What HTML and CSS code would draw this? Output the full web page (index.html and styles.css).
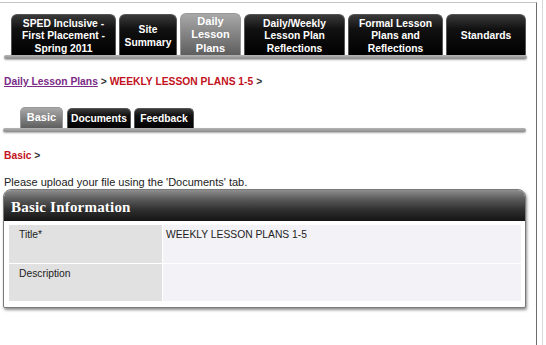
FILE: index.html
```html
<!DOCTYPE html>
<html>
<head>
<meta charset="utf-8">
<link rel="stylesheet" href="styles.css">
</head>
<body>
<div class="frame">
  <nav class="maintabs">
    <div class="tabrow">
      <a class="tab w1">SPED Inclusive -<br>First Placement -<br>Spring 2011</a>
      <a class="tab w2">Site<br>Summary</a>
      <a class="tab w3 active">Daily<br>Lesson<br>Plans</a>
      <a class="tab w4">Daily/Weekly<br>Lesson Plan<br>Reflections</a>
      <a class="tab w5">Formal Lesson<br>Plans and<br>Reflections</a>
      <a class="tab w6">Standards</a>
    </div>
    <div class="underbar"></div>
  </nav>

  <div class="crumbs">
    <a class="crumb-link">Daily Lesson Plans</a> <span class="sep">&gt;</span> <span class="crumb-cur">WEEKLY LESSON PLANS 1-5</span> <span class="sep">&gt;</span>
  </div>

  <nav class="subtabs">
    <div class="subrow">
      <a class="stab s1 active">Basic</a>
      <a class="stab s2">Documents</a>
      <a class="stab s3">Feedback</a>
    </div>
    <div class="underbar small"></div>
  </nav>

  <div class="subcrumb"><span class="crumb-cur">Basic</span> <span class="sep">&gt;</span></div>

  <p class="note">Please upload your file using the 'Documents' tab.</p>

  <section class="box">
    <h2 class="box-head">Basic Information</h2>
    <div class="grid">
      <div class="lbl r1">Title*</div>
      <div class="val r1">WEEKLY LESSON PLANS 1-5</div>
      <div class="lbl r2">Description</div>
      <div class="val r2"></div>
    </div>
  </section>
</div>
<div class="scroll"></div>
</body>
</html>
```

FILE: styles.css
```css
html, body {
  margin: 0;
  padding: 0;
  background: #fff;
}
body {
  font-family: "Liberation Sans", Arial, sans-serif;
  font-size: 11px;
  color: #222;
  position: relative;
  width: 546px;
  height: 345px;
  overflow: hidden;
}
.frame {
  margin-top: 2px;
  width: 537px;
  height: 343px;
  border-top: 1px solid #c6c6c6;
  border-right: 1px solid #6e6e6e;
  box-sizing: border-box;
}
.scroll {
  position: absolute;
  left: 542px;
  top: 0;
  width: 4px;
  height: 345px;
  border-left: 1px solid #d8d8d8;
}
.maintabs {
  margin: 10px 0 0 4px;
  width: 523px;
}
.tabrow {
  display: flex;
  align-items: flex-end;
  gap: 3px;
  padding-left: 7px;
}
.tab {
  display: flex;
  align-items: center;
  justify-content: center;
  text-align: center;
  height: 41px;
  box-sizing: border-box;
  border-radius: 6px 6px 0 0;
  background: linear-gradient(#3a3a3a 0%, #111 35%, #000 100%);
  color: #fff;
  font-weight: bold;
  font-size: 10.3px;
  line-height: 12.3px;
  padding-top: 3px;
  border: 1px solid #555;
  border-bottom: none;
}
.tab.active {
  height: 42px;
  font-size: 11px;
  line-height: 13.5px;
  padding-top: 1px;
  background: linear-gradient(#a8a8a8 0%, #8a8a8a 40%, #5e5e5e 100%);
  border-color: #999;
  color: #fff;
}
.w1 { width: 105px; }
.w2 { width: 58px; }
.w3 { width: 61px; }
.w4 { width: 101px; }
.w5 { width: 95px; }
.w6 { width: 80px; }
.underbar {
  height: 4px;
  background: linear-gradient(#b4b4b4, #8c8c8c);
  border-radius: 2px;
  box-shadow: 0 1px 2px rgba(0,0,0,0.35);
}
.crumbs {
  margin: 16px 0 0 4px;
  line-height: 14px;
  font-weight: bold;
  font-size: 10.3px;
}
.crumb-link {
  color: #7a2a86;
  text-decoration: underline;
}
.crumb-cur {
  color: #c3121c;
}
.sep {
  color: #333;
}
.subtabs {
  margin: 18px 0 0 3px;
  width: 523px;
}
.subrow {
  display: flex;
  align-items: flex-end;
  gap: 3px;
  padding-left: 17px;
}
.stab {
  display: flex;
  align-items: center;
  justify-content: center;
  height: 20px;
  box-sizing: border-box;
  border-radius: 5px 5px 0 0;
  background: linear-gradient(#3a3a3a 0%, #111 35%, #000 100%);
  color: #fff;
  font-weight: bold;
  font-size: 10.3px;
  border: 1px solid #555;
  border-bottom: none;
}
.stab.active {
  height: 21px;
  font-size: 11px;
  padding-bottom: 2px;
  background: linear-gradient(#a8a8a8 0%, #8a8a8a 40%, #5e5e5e 100%);
  border-color: #999;
}
.s1 { width: 43px; margin-right: 1px; }
.s2 { width: 64px; }
.s3 { width: 60px; }
.subcrumb {
  margin: 17px 0 0 4px;
  line-height: 14px;
  font-weight: bold;
  font-size: 10.3px;
}
.note {
  margin: 12px 0 0 4px;
  line-height: 14px;
}
.box {
  margin: 0 0 0 3px;
  width: 523px;
  border: 1px solid #7a7a7a;
  border-radius: 8px 8px 2px 2px;
  box-sizing: border-box;
  background: #fff;
  box-shadow: 1px 2px 3px rgba(0,0,0,0.45);
  padding-bottom: 6px;
  overflow: hidden;
}
.box-head {
  margin: 0;
  height: 31px;
  box-sizing: border-box;
  padding: 8px 0 0 7px;
  font-family: "Liberation Serif", "Times New Roman", serif;
  font-size: 15px;
  line-height: 18px;
  font-weight: bold;
  color: #fff;
  background: linear-gradient(#8e8e8e 0%, #5a5a5a 30%, #2e2e2e 65%, #151515 100%);
  letter-spacing: 0.2px;
}
.grid {
  display: grid;
  grid-template-columns: 153px 1fr;
  grid-template-rows: 38px 37px;
  gap: 1px;
  margin: 4px 4px 0 5px;
  font-size: 10.3px;
}
.lbl {
  background: #e1e1e1;
  padding: 3px 0 0 10px;
  line-height: 14px;
}
.val {
  background: #f2f2f7;
  padding: 3px 0 0 3px;
  line-height: 14px;
}
```
